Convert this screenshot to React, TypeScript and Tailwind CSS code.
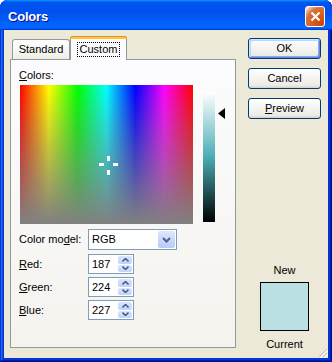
import React from "react";

const Spin = () => (
  <div className="flex flex-col w-[14px] h-[16px] mr-px gap-px">
    {[0, 1].map((i) => (
      <div
        key={i}
        className="flex-1 flex items-center justify-center rounded-[2px] bg-[linear-gradient(180deg,#dbe5fd,#c1d3fb)]"
      >
        <svg width="7" height="4" viewBox="0 0 7 4">
          <path
            d={i === 0 ? "M0.5 3.5 L3.5 0.5 L6.5 3.5" : "M0.5 0.5 L3.5 3.5 L6.5 0.5"}
            fill="none"
            stroke="#4d6185"
            strokeWidth="1.6"
          />
        </svg>
      </div>
    ))}
  </div>
);

const NumField = ({ label, value }: { label: React.ReactNode; value: string }) => (
  <div className="flex items-center h-[20px]">
    <span className="w-[69px]">{label}</span>
    <div className="w-[46px] h-[20px] border border-[#7f9db9] bg-white flex items-center justify-between">
      <span className="pl-[3px]">{value}</span>
      <Spin />
    </div>
  </div>
);

const XpButton = ({ children, primary }: { children: React.ReactNode; primary?: boolean }) => (
  <div
    className={
      "w-[73px] h-[21px] rounded-[3px] border border-[#003c74] flex items-center justify-center bg-[linear-gradient(180deg,#fff,#ecebe6_86%,#d6d0c5)] " +
      (primary ? "shadow-[inset_1px_1px_#cee7ff,inset_-1px_-1px_#6982ee,inset_2px_2px_#bcd4f6,inset_-2px_-2px_#89ade4]" : "")
    }
  >
    {children}
  </div>
);

export default function App() {
  return (
    <div className="w-[332px] h-[362px] bg-white font-['Liberation_Sans',Arial,sans-serif] text-[11px] leading-[13px] text-black">
      <div className="flex flex-col h-full rounded-t-[8px] overflow-hidden bg-[#0831d9] px-[4px] pb-[4px] shadow-[inset_-1px_-1px_#00138c,inset_1px_1px_#0831d9,inset_-2px_-2px_#001ea0,inset_2px_2px_#166aee,inset_-3px_-3px_#003bda,inset_3px_3px_#0855dd]">
        {/* title bar */}
        <div className="-mx-[4px] h-[30px] shrink-0 flex items-center justify-between pl-[8px] pr-[7px] bg-[linear-gradient(180deg,#0997ff,#0053ee_8%,#0050ee_40%,#06f_88%,#06f_93%,#005bff_95%,#003dd7_96%,#003dd7)]">
          <span className="text-white font-bold text-[13px] tracking-[-0.2px] [text-shadow:1px_1px_#0f1089] pt-[3px]">
            Colors
          </span>
          <div className="w-[20px] h-[21px] mt-[3px] rounded-[3px] border border-white flex items-center justify-center bg-[radial-gradient(circle_at_90%_90%,#cc4600_0%,#dc6527_55%,#cd7546_70%,#ffccb2_90%,#fff_100%)]">
            <svg width="11" height="11" viewBox="0 0 11 11">
              <path d="M1.5 1.5 L9.5 9.5 M9.5 1.5 L1.5 9.5" stroke="#fff" strokeWidth="2.2" />
            </svg>
          </div>
        </div>

        {/* client area */}
        <div className="relative flex-1 bg-[#ece9d8] flex pl-[6px] pt-[6px]">
          {/* tab control */}
          <div className="w-[226px] flex flex-col">
            <div className="relative z-10 flex items-end h-[24px] -mb-px">
              <div className="ml-[2px] mb-px w-[58px] h-[20px] flex items-center justify-center rounded-t-[3px] border border-b-0 border-[#919b9c] bg-[linear-gradient(180deg,#fff,#fafaf9_26%,#f0f0ea_95%,#ecebe6)]">
                Standard
              </div>
              <div className="w-[57px] h-[24px] flex flex-col rounded-t-[3px] border-x border-[#919b9c] bg-[#fcfcfe]">
                <div className="-mx-px h-[3px] rounded-t-[3px] border-t border-[#e68b2c] bg-[#ffc73c]" />
                <div className="flex-1 flex items-center justify-center pb-px">
                  <span className="px-[3px] py-px outline-1 outline-dotted outline-black -outline-offset-1">
                    Custom
                  </span>
                </div>
              </div>
            </div>
            <div className="h-[289px] border border-[#919b9c] bg-[linear-gradient(180deg,#fcfcfe,#f4f3ee)] pl-[8px] pt-[9px]">
              <div>
                <u className="underline-offset-[1px]">C</u>olors:
              </div>
              <div className="flex mt-[3px] ml-px">
                <div className="relative w-[173px] h-[139px] bg-[linear-gradient(90deg,#f00,#ff0,#0f0,#0ff,#00f,#f0f,#f00)]">
                  <div className="absolute inset-0 bg-[linear-gradient(180deg,rgba(128,128,128,0),#808080)]" />
                  <div className="absolute left-[87px] top-[71px] w-[3px] h-[5px] bg-white" />
                  <div className="absolute left-[87px] top-[85px] w-[3px] h-[5px] bg-white" />
                  <div className="absolute left-[79px] top-[78px] w-[5px] h-[3px] bg-white" />
                  <div className="absolute left-[93px] top-[78px] w-[5px] h-[3px] bg-white" />
                </div>
                <div className="relative ml-[10px] mt-[7px] w-[12px] h-[130px] bg-[linear-gradient(180deg,#fff,#4aadb5,#000)]">
                  <svg className="absolute left-[15px] top-[16px]" width="7" height="11" viewBox="0 0 7 11">
                    <path d="M0 5.5 L7 0 L7 11 Z" fill="#000" />
                  </svg>
                </div>
              </div>

              <div className="flex items-center h-[21px] mt-[5px]">
                <span className="w-[69px]">
                  Color mo<u className="underline-offset-[1px]">d</u>el:
                </span>
                <div className="w-[89px] h-[21px] border border-[#7f9db9] bg-white flex items-center justify-between">
                  <span className="pl-[3px]">RGB</span>
                  <div className="w-[17px] h-[17px] mr-px rounded-[2px] flex items-center justify-center bg-[linear-gradient(180deg,#dde7fe,#b6cbf9)]">
                    <svg width="9" height="6" viewBox="0 0 9 6">
                      <path d="M1 1 L4.5 4.5 L8 1" fill="none" stroke="#4d6185" strokeWidth="2" />
                    </svg>
                  </div>
                </div>
              </div>
              <div className="flex flex-col gap-[3px] mt-[4px]">
                <NumField label={<><u className="underline-offset-[1px]">R</u>ed:</>} value="187" />
                <NumField label={<><u className="underline-offset-[1px]">G</u>reen:</>} value="224" />
                <NumField label={<><u className="underline-offset-[1px]">B</u>lue:</>} value="227" />
              </div>
            </div>
          </div>

          {/* buttons and preview */}
          <div className="ml-[12px] mt-[2px] w-[73px] flex flex-col items-center">
            <div className="flex flex-col gap-[9px]">
              <XpButton primary>OK</XpButton>
              <XpButton>Cancel</XpButton>
              <XpButton>
                <span>
                  <u className="underline-offset-[1px]">P</u>review
                </span>
              </XpButton>
            </div>
            <div className="mt-[145px]">New</div>
            <div className="mt-[5px] w-[49px] h-[49px] border border-black bg-[#bbe0e3]" />
            <div className="mt-[7px]">Current</div>
          </div>

          <svg className="absolute right-0 bottom-0" width="12" height="12" viewBox="0 0 12 12">
            <path d="M11 3 L3 11 M11 7 L7 11" stroke="#c5c2b2" strokeWidth="1" />
            <path d="M12 4 L4 12 M12 8 L8 12" stroke="#fff" strokeWidth="1" />
          </svg>
        </div>
      </div>
    </div>
  );
}
